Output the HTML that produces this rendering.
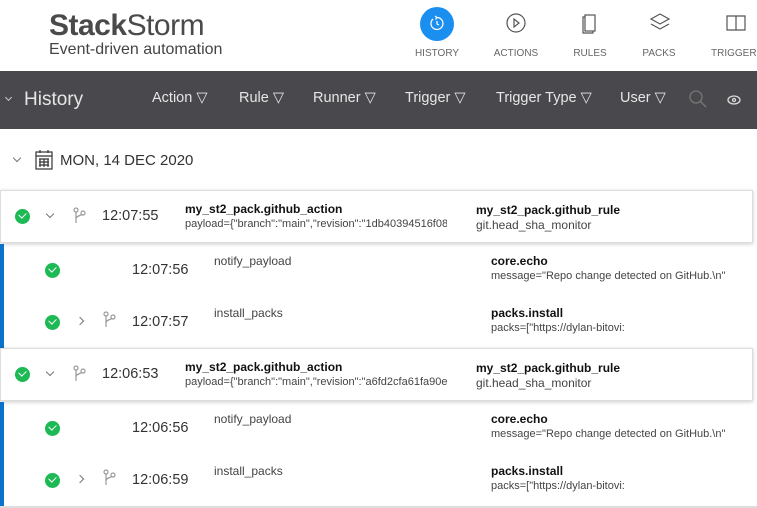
<!DOCTYPE html><html><head><meta charset="utf-8"><style>
*{box-sizing:border-box;margin:0;padding:0}
body{width:757px;height:508px;overflow:hidden;background:#fff;font-family:"Liberation Sans",sans-serif;color:#222;position:relative}
.a{position:absolute;white-space:nowrap}
.nav{font-size:10px;color:#666;text-align:center;width:70px}
.dark{position:absolute;left:0;top:71px;width:757px;height:58px;background:#49494d;color:#fff}
.f{position:absolute;top:19px;font-size:14.5px;color:#e6e6e6}
.ok{position:absolute;width:15px;height:15px;border-radius:50%;background:#1db954;}
.ok:after{content:"";position:absolute;left:4px;top:3px;width:6px;height:4px;border-left:1.5px solid #fff;border-bottom:1.5px solid #fff;transform:rotate(-45deg)}
.box{position:absolute;left:0;width:753px;background:#fff;border:1px solid #ddd;box-shadow:0 1px 4px rgba(0,0,0,.2)}
.bar{position:absolute;left:0;width:4px;background:#0a72c8}
.t{font-size:14.5px;color:#333}
.b{font-size:12px;font-weight:bold;color:#111}
.s{font-size:11px;color:#444}
.n{font-size:12px;color:#444}
.ch{position:absolute;width:6px;height:6px;border-right:1px solid #777;border-bottom:1px solid #777}
</style></head><body>
<div class="a" style="left:49px;top:9px;font-size:30px;color:#4a4a4a;letter-spacing:-0.5px"><b>Stack</b>Storm</div>
<div class="a" style="left:49px;top:41px;font-size:16px;color:#444">Event-driven automation</div>
<div class="a" style="left:420px;top:7px;width:34px;height:34px;border-radius:50%;background:#1a8ff0"></div>
<svg class="a" style="left:428px;top:15px" width="18" height="18" viewBox="0 0 18 18" fill="none" stroke="#fff" stroke-width="1.2"><path d="M5 4a6 6 0 1 0 4-1.5M9 2.5L7 1M9 2.5L7.5 4.5M9 6v3l2 1"/></svg>
<svg class="a" style="left:506px;top:13px" width="20" height="20" viewBox="0 0 20 20" fill="none" stroke="#555" stroke-width="1.2"><circle cx="10" cy="10" r="9"/><path d="M8 6l5 4-5 4z"/></svg>
<svg class="a" style="left:582px;top:14px" width="16" height="20" viewBox="0 0 16 20" fill="none" stroke="#c0392b" stroke-width="1.2"><rect x="3" y="1" width="10" height="16" stroke="#555"/><path d="M3 3H1v16h10v-2" stroke="#555"/></svg>
<svg class="a" style="left:649px;top:13px" width="22" height="20" viewBox="0 0 22 20" fill="none" stroke="#555" stroke-width="1.2"><path d="M11 1l9 5-9 5-9-5zM2 11l9 5 9-5"/></svg>
<svg class="a" style="left:726px;top:14px" width="20" height="18" viewBox="0 0 20 18" fill="none" stroke="#555" stroke-width="1.2"><path d="M10 3v13M1 2h9v14H1zM10 2h9v14h-9"/></svg>
<div class="a nav" style="left:402px;top:48px">HISTORY</div>
<div class="a nav" style="left:481px;top:48px">ACTIONS</div>
<div class="a nav" style="left:555px;top:48px">RULES</div>
<div class="a nav" style="left:624px;top:48px">PACKS</div>
<div class="a nav" style="left:711px;top:48px;text-align:left">TRIGGERS</div>
<div class="dark">
<div class="ch" style="left:6px;top:24px;border-color:#ccc;transform:rotate(45deg);width:5px;height:5px"></div>
<div class="f" style="left:24px;top:18px;font-size:19px">History</div>
<div class="f" style="left:152px">Action ▽</div>
<div class="f" style="left:239px">Rule ▽</div>
<div class="f" style="left:313px">Runner ▽</div>
<div class="f" style="left:405px">Trigger ▽</div>
<div class="f" style="left:496px">Trigger Type ▽</div>
<div class="f" style="left:620px">User ▽</div>
<svg class="a" style="left:688px;top:18px" width="20" height="20" fill="none" stroke="#777" stroke-width="1.3"><circle cx="8" cy="8" r="6"/><path d="M12 12l6 6"/></svg>
<svg class="a" style="left:727px;top:24px" width="14" height="10" fill="none" stroke="#ddd" stroke-width="1.3"><ellipse cx="7" cy="5" rx="6" ry="4"/><circle cx="7" cy="5" r="1.5"/></svg>
</div>
<div class="ch" style="left:14px;top:155px;transform:rotate(45deg)"></div>
<svg class="a" style="left:35px;top:150px" width="18" height="20" fill="none" stroke="#333" stroke-width="1.2"><rect x="1" y="2" width="16" height="17"/><path d="M1 6h16M4 9h10M4 12h10M4 15h10M5 9v8M9 9v8M13 9v8M5 0v3M13 0v3"/></svg>
<div class="a" style="left:60px;top:152px;font-size:15px;color:#333">MON, 14 DEC 2020</div>

<div class="box" style="top:190px;height:53px"></div>
<div class="ok" style="left:15px;top:209px"></div>
<div class="ch" style="left:47px;top:211px;transform:rotate(45deg)"></div>
<svg class="a" style="left:72px;top:207px" width="14" height="16" fill="none" stroke="#999" stroke-width="1.2"><circle cx="4" cy="3" r="2"/><circle cx="11" cy="6" r="2"/><path d="M4 5v11M4 12c0-4 6-3 6-5"/></svg>
<div class="a t" style="left:102px;top:208px">12:07:55</div>
<div class="a b" style="left:185px;top:202px">my_st2_pack.github_action</div>
<div class="a s" style="left:185px;top:218px;width:262px;overflow:hidden">payload={"branch":"main","revision":"1db40394516f089c</div>
<div class="a b" style="left:476px;top:203px">my_st2_pack.github_rule</div>
<div class="a n" style="left:476px;top:218px">git.head_sha_monitor</div>
<div class="bar" style="top:244px;height:104px"></div>
<div class="ok" style="left:45px;top:263px"></div>
<div class="a t" style="left:132px;top:262px">12:07:56</div>
<div class="a n" style="left:214px;top:254px">notify_payload</div>
<div class="a b" style="left:491px;top:254px">core.echo</div>
<div class="a s" style="left:491px;top:270px">message="Repo change detected on GitHub.\n"</div>
<div class="ok" style="left:45px;top:315px"></div>
<div class="ch" style="left:77px;top:318px;transform:rotate(-45deg)"></div>
<svg class="a" style="left:102px;top:311px" width="14" height="16" fill="none" stroke="#999" stroke-width="1.2"><circle cx="4" cy="3" r="2"/><circle cx="11" cy="6" r="2"/><path d="M4 5v11M4 12c0-4 6-3 6-5"/></svg>
<div class="a t" style="left:132px;top:314px">12:07:57</div>
<div class="a n" style="left:214px;top:306px">install_packs</div>
<div class="a b" style="left:491px;top:306px">packs.install</div>
<div class="a s" style="left:491px;top:322px">packs=["https://dylan-bitovi:</div>

<div class="box" style="top:348px;height:53px"></div>
<div class="ok" style="left:15px;top:367px"></div>
<div class="ch" style="left:47px;top:369px;transform:rotate(45deg)"></div>
<svg class="a" style="left:72px;top:365px" width="14" height="16" fill="none" stroke="#999" stroke-width="1.2"><circle cx="4" cy="3" r="2"/><circle cx="11" cy="6" r="2"/><path d="M4 5v11M4 12c0-4 6-3 6-5"/></svg>
<div class="a t" style="left:102px;top:366px">12:06:53</div>
<div class="a b" style="left:185px;top:360px">my_st2_pack.github_action</div>
<div class="a s" style="left:185px;top:376px;width:262px;overflow:hidden">payload={"branch":"main","revision":"a6fd2cfa61fa90e53</div>
<div class="a b" style="left:476px;top:361px">my_st2_pack.github_rule</div>
<div class="a n" style="left:476px;top:376px">git.head_sha_monitor</div>
<div class="bar" style="top:402px;height:106px"></div>
<div class="ok" style="left:45px;top:421px"></div>
<div class="a t" style="left:132px;top:420px">12:06:56</div>
<div class="a n" style="left:214px;top:412px">notify_payload</div>
<div class="a b" style="left:491px;top:412px">core.echo</div>
<div class="a s" style="left:491px;top:428px">message="Repo change detected on GitHub.\n"</div>
<div class="ok" style="left:45px;top:473px"></div>
<div class="ch" style="left:77px;top:476px;transform:rotate(-45deg)"></div>
<svg class="a" style="left:102px;top:469px" width="14" height="16" fill="none" stroke="#999" stroke-width="1.2"><circle cx="4" cy="3" r="2"/><circle cx="11" cy="6" r="2"/><path d="M4 5v11M4 12c0-4 6-3 6-5"/></svg>
<div class="a t" style="left:132px;top:472px">12:06:59</div>
<div class="a n" style="left:214px;top:464px">install_packs</div>
<div class="a b" style="left:491px;top:464px">packs.install</div>
<div class="a s" style="left:491px;top:480px">packs=["https://dylan-bitovi:</div>
<div class="a" style="left:0;top:506px;width:757px;height:2px;background:#ddd"></div>
</body></html>
